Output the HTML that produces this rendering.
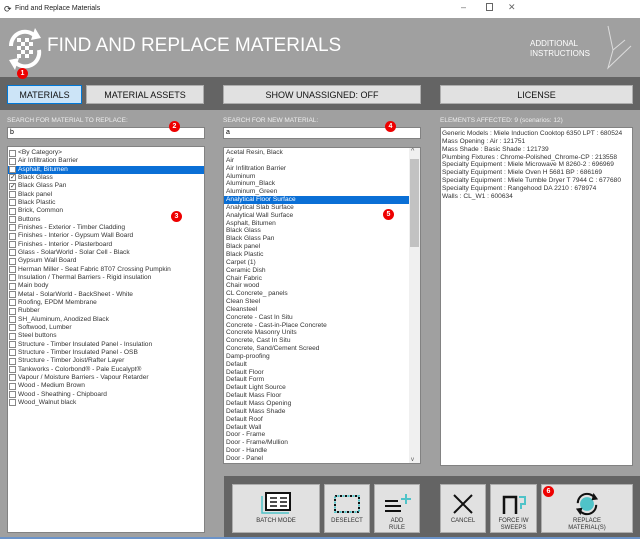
<!DOCTYPE html>
<html><head><meta charset="utf-8"><style>
*{margin:0;padding:0;box-sizing:border-box}
body{width:640px;height:539px;overflow:hidden;background:#a0a0a0;font-family:"Liberation Sans",sans-serif;position:relative}
.a{position:absolute}
.tb{left:0;top:0;width:640px;height:18px;background:#fff;font-size:7px;color:#222}
.btn{position:absolute;background:#e1e1e1;border:1px solid #adadad;font-size:9px;color:#111;display:flex;align-items:center;justify-content:center}
.lbl{font-size:6.5px;color:#eee}
.box{background:#fff;border:1px solid #828282}
.li{font-size:6.6px;color:#333;height:8.33px;line-height:8.33px;padding-left:10px;position:relative;white-space:nowrap}
.li i{position:absolute;left:1px;top:0.5px;width:7px;height:7px;border:1px solid #888;background:#fff;font-style:normal;font-size:7px;line-height:5px;color:#333}
.ml{font-size:6.6px;color:#333;height:7.85px;line-height:7.85px;padding-left:2px;white-space:nowrap}
.sel{background:#0a6fd6;color:#fff}
.dot{position:absolute;width:11px;height:11px;border-radius:50%;background:#e00;color:#fff;font-size:7px;font-weight:bold;text-align:center;line-height:11px}
.bb{position:absolute;top:484px;height:49px;background:#e1e1e1;border:1px solid #adadad;font-size:6px;color:#333;text-align:center}
.bb svg{position:absolute;left:50%;transform:translateX(-50%);top:7px}
.bb span{position:absolute;left:0;right:0;top:33px;line-height:7px}
</style></head><body>
<div class="a tb"><span class="a" style="left:4px;top:4px;font-size:9px">⟳</span><span class="a" style="left:15px;top:5px">Find and Replace Materials</span>
<span class="a" style="left:461px;top:2px;color:#666;font-size:9px">–</span><span class="a" style="left:486px;top:3px;width:7px;height:8px;border:1px solid #666"></span><span class="a" style="left:508px;top:2px;color:#666;font-size:9px">✕</span></div>
<div class="a" style="left:0;top:18px;width:640px;height:59px;background:#a0a0a0"></div>
<svg class="a" style="left:5px;top:24px" width="40" height="50" viewBox="0 0 40 50">
<path d="M6 22 A14 14 0 0 1 30 12" stroke="#fff" stroke-width="4" fill="none"/><polygon points="30,4 36,14 26,16" fill="#fff"/>
<path d="M34 26 A14 14 0 0 1 10 38" stroke="#fff" stroke-width="4" fill="none"/><polygon points="10,46 4,36 14,34" fill="#fff"/>
<g fill="#fff"><rect x="12" y="14" width="4" height="4"/><rect x="20" y="14" width="4" height="4"/><rect x="16" y="18" width="4" height="4"/><rect x="24" y="18" width="4" height="4"/><rect x="12" y="22" width="4" height="4"/><rect x="20" y="22" width="4" height="4"/><rect x="16" y="26" width="4" height="4"/><rect x="24" y="26" width="4" height="4"/><rect x="12" y="30" width="4" height="4"/><rect x="20" y="30" width="4" height="4"/></g></svg>
<div class="a" style="left:47px;top:35px;font-size:19px;color:#fff;white-space:nowrap">FIND AND REPLACE MATERIALS</div>
<div class="a" style="left:530px;top:39px;font-size:8px;color:#fff;line-height:10px">ADDITIONAL<br>INSTRUCTIONS</div>
<svg class="a" style="left:605px;top:24px" width="28" height="46"><path d="M3 2 L8 26 L20 16 M8 26 L3 44 L26 22" stroke="#ddd" stroke-width="1" fill="none"/></svg>
<div class="a" style="left:0;top:77px;width:640px;height:33px;background:#646464"></div>
<div class="btn" style="left:7px;top:85px;width:75px;height:19px;background:#cce4f7;border-color:#0078d7">MATERIALS</div>
<div class="btn" style="left:86px;top:85px;width:118px;height:19px">MATERIAL ASSETS</div>
<div class="btn" style="left:223px;top:85px;width:198px;height:19px">SHOW UNASSIGNED: OFF</div>
<div class="btn" style="left:440px;top:85px;width:193px;height:19px">LICENSE</div>
<div class="dot" style="left:17px;top:68px">1</div>

<div class="a lbl" style="left:7px;top:117px">SEARCH FOR MATERIAL TO REPLACE:</div>
<div class="a box" style="left:7px;top:127px;width:198px;height:12px;font-size:7px;padding-left:2px;line-height:10px">b</div>
<div class="dot" style="left:169px;top:121px">2</div>
<div class="a box" style="left:7px;top:146px;width:198px;height:387px;padding-top:2px">
<div class="li"><i></i>&lt;By Category&gt;</div><div class="li"><i></i>Air Infiltration Barrier</div><div class="li sel"><i></i>Asphalt, Bitumen</div><div class="li"><i>✓</i>Black Glass</div><div class="li"><i>✓</i>Black Glass Pan</div><div class="li"><i></i>Black panel</div><div class="li"><i></i>Black Plastic</div><div class="li"><i></i>Brick, Common</div><div class="li"><i></i>Buttons</div><div class="li"><i></i>Finishes - Exterior - Timber Cladding</div><div class="li"><i></i>Finishes - Interior - Gypsum Wall Board</div><div class="li"><i></i>Finishes - Interior - Plasterboard</div><div class="li"><i></i>Glass - SolarWorld - Solar Cell - Black</div><div class="li"><i></i>Gypsum Wall Board</div><div class="li"><i></i>Herman Miller - Seat Fabric 8T07 Crossing Pumpkin</div><div class="li"><i></i>Insulation / Thermal Barriers - Rigid insulation</div><div class="li"><i></i>Main body</div><div class="li"><i></i>Metal - SolarWorld - BackSheet - White</div><div class="li"><i></i>Roofing, EPDM Membrane</div><div class="li"><i></i>Rubber</div><div class="li"><i></i>SH_Aluminum, Anodized Black</div><div class="li"><i></i>Softwood, Lumber</div><div class="li"><i></i>Steel buttons</div><div class="li"><i></i>Structure - Timber Insulated Panel - Insulation</div><div class="li"><i></i>Structure - Timber Insulated Panel - OSB</div><div class="li"><i></i>Structure - Timber Joist/Rafter Layer</div><div class="li"><i></i>Tankworks - Colorbond® - Pale Eucalypt®</div><div class="li"><i></i>Vapour / Moisture Barriers - Vapour Retarder</div><div class="li"><i></i>Wood - Medium Brown</div><div class="li"><i></i>Wood - Sheathing - Chipboard</div><div class="li"><i></i>Wood_Walnut black</div>
</div>
<div class="dot" style="left:171px;top:211px">3</div>

<div class="a lbl" style="left:223px;top:117px">SEARCH FOR NEW MATERIAL:</div>
<div class="a box" style="left:223px;top:127px;width:198px;height:12px;font-size:7px;padding-left:2px;line-height:10px">a</div>
<div class="dot" style="left:385px;top:121px">4</div>
<div class="a box" style="left:223px;top:147px;width:198px;height:317px;padding-top:1px;overflow:hidden">
<div class="a" style="right:0;top:0;width:11px;height:317px;background:#f0f0f0"><div class="a" style="left:1px;top:11px;width:9px;height:88px;background:#c2c2c2"></div><span class="a" style="left:2px;top:0;font-size:7px;color:#555">^</span><span class="a" style="left:2px;bottom:2px;font-size:6px;color:#555">v</span></div>
<div style="width:187px">
<div class="ml">Acetal Resin, Black</div><div class="ml">Air</div><div class="ml">Air Infiltration Barrier</div><div class="ml">Aluminum</div><div class="ml">Aluminum_Black</div><div class="ml">Aluminum_Green</div><div class="ml sel">Analytical Floor Surface</div><div class="ml">Analytical Slab Surface</div><div class="ml">Analytical Wall Surface</div><div class="ml">Asphalt, Bitumen</div><div class="ml">Black Glass</div><div class="ml">Black Glass Pan</div><div class="ml">Black panel</div><div class="ml">Black Plastic</div><div class="ml">Carpet (1)</div><div class="ml">Ceramic Dish</div><div class="ml">Chair Fabric</div><div class="ml">Chair wood</div><div class="ml">CL Concrete_ panels</div><div class="ml">Clean Steel</div><div class="ml">Cleansteel</div><div class="ml">Concrete - Cast In Situ</div><div class="ml">Concrete - Cast-in-Place Concrete</div><div class="ml">Concrete Masonry Units</div><div class="ml">Concrete, Cast In Situ</div><div class="ml">Concrete, Sand/Cement Screed</div><div class="ml">Damp-proofing</div><div class="ml">Default</div><div class="ml">Default Floor</div><div class="ml">Default Form</div><div class="ml">Default Light Source</div><div class="ml">Default Mass Floor</div><div class="ml">Default Mass Opening</div><div class="ml">Default Mass Shade</div><div class="ml">Default Roof</div><div class="ml">Default Wall</div><div class="ml">Door - Frame</div><div class="ml">Door - Frame/Mullion</div><div class="ml">Door - Handle</div><div class="ml">Door - Panel</div>
</div></div>
<div class="dot" style="left:383px;top:209px">5</div>

<div class="a lbl" style="left:440px;top:117px">ELEMENTS AFFECTED: 9 (scenarios: 12)</div>
<div class="a box" style="left:440px;top:127px;width:193px;height:339px;padding:2px 1px;font-size:6.6px;line-height:7.85px;color:#333;white-space:nowrap;overflow:hidden">
Generic Models : Miele Induction Cooktop 6350 LPT : 680524<br>Mass Opening : Air : 121751<br>Mass Shade : Basic Shade : 121739<br>Plumbing Fixtures : Chrome-Polished_Chrome-CP : 213558<br>Specialty Equipment : Miele Microwave M 8260-2 : 696969<br>Specialty Equipment : Miele Oven H 5681 BP : 686169<br>Specialty Equipment : Miele Tumble Dryer T 7944 C : 677680<br>Specialty Equipment : Rangehood DA 2210 : 678974<br>Walls : CL_W1 : 600634</div>

<div class="a" style="left:224px;top:476px;width:416px;height:63px;background:#646464"></div>
<div class="a" style="left:0;top:537px;width:640px;height:2px;background:#6b93c9"></div>
<div class="bb" style="left:232px;width:88px"><svg width="34" height="24"><path d="M3 4 V21 H30" stroke="#4fc3c8" stroke-width="1.5" fill="none"/><rect x="7" y="1" width="24" height="17" fill="#fff" stroke="#111" stroke-width="2"/><g stroke="#111" stroke-width="1.6"><path d="M11 6h7M21 6h7M11 10h7M21 10h7M11 14h7M21 14h7"/></g></svg><span>BATCH MODE</span></div>
<div class="bb" style="left:324px;width:46px"><svg width="30" height="24"><rect x="3" y="4" width="24" height="16" fill="none" stroke="#111" stroke-width="2" stroke-dasharray="2 3"/><rect x="3" y="4" width="24" height="16" fill="none" stroke="#4fc3c8" stroke-width="2" stroke-dasharray="2 3" stroke-dashoffset="2.5"/></svg><span>DESELECT</span></div>
<div class="bb" style="left:374px;width:46px"><svg width="30" height="24"><path d="M3 9h13M3 14h16M3 19h16" stroke="#111" stroke-width="2"/><path d="M19 7h10M24 2v10" stroke="#4fc3c8" stroke-width="2"/></svg><span>ADD<br>RULE</span></div>
<div class="bb" style="left:440px;width:46px"><svg width="30" height="24"><path d="M6 3L24 21M24 3L6 21" stroke="#111" stroke-width="2"/></svg><span>CANCEL</span></div>
<div class="bb" style="left:490px;width:47px"><svg width="30" height="24"><path d="M5 22V5H17V22" stroke="#111" stroke-width="2.5" fill="none"/><path d="M20 5h6v7h-4v5" stroke="#4fc3c8" stroke-width="2" fill="none"/></svg><span>FORCE IW<br>SWEEPS</span></div>
<div class="bb" style="left:541px;width:92px"><svg width="30" height="24" viewBox="0 0 30 26"><circle cx="15" cy="13" r="7.5" fill="#4fc3c8"/><path d="M5 12A10 10 0 0 1 23 6M25 14A10 10 0 0 1 7 20" stroke="#111" stroke-width="2.2" fill="none"/><polygon points="22,1 27,8 20,9" fill="#111"/><polygon points="8,25 3,18 10,17" fill="#111"/></svg><span>REPLACE<br>MATERIAL(S)</span></div>
<div class="dot" style="left:543px;top:486px">6</div>
</body></html>
